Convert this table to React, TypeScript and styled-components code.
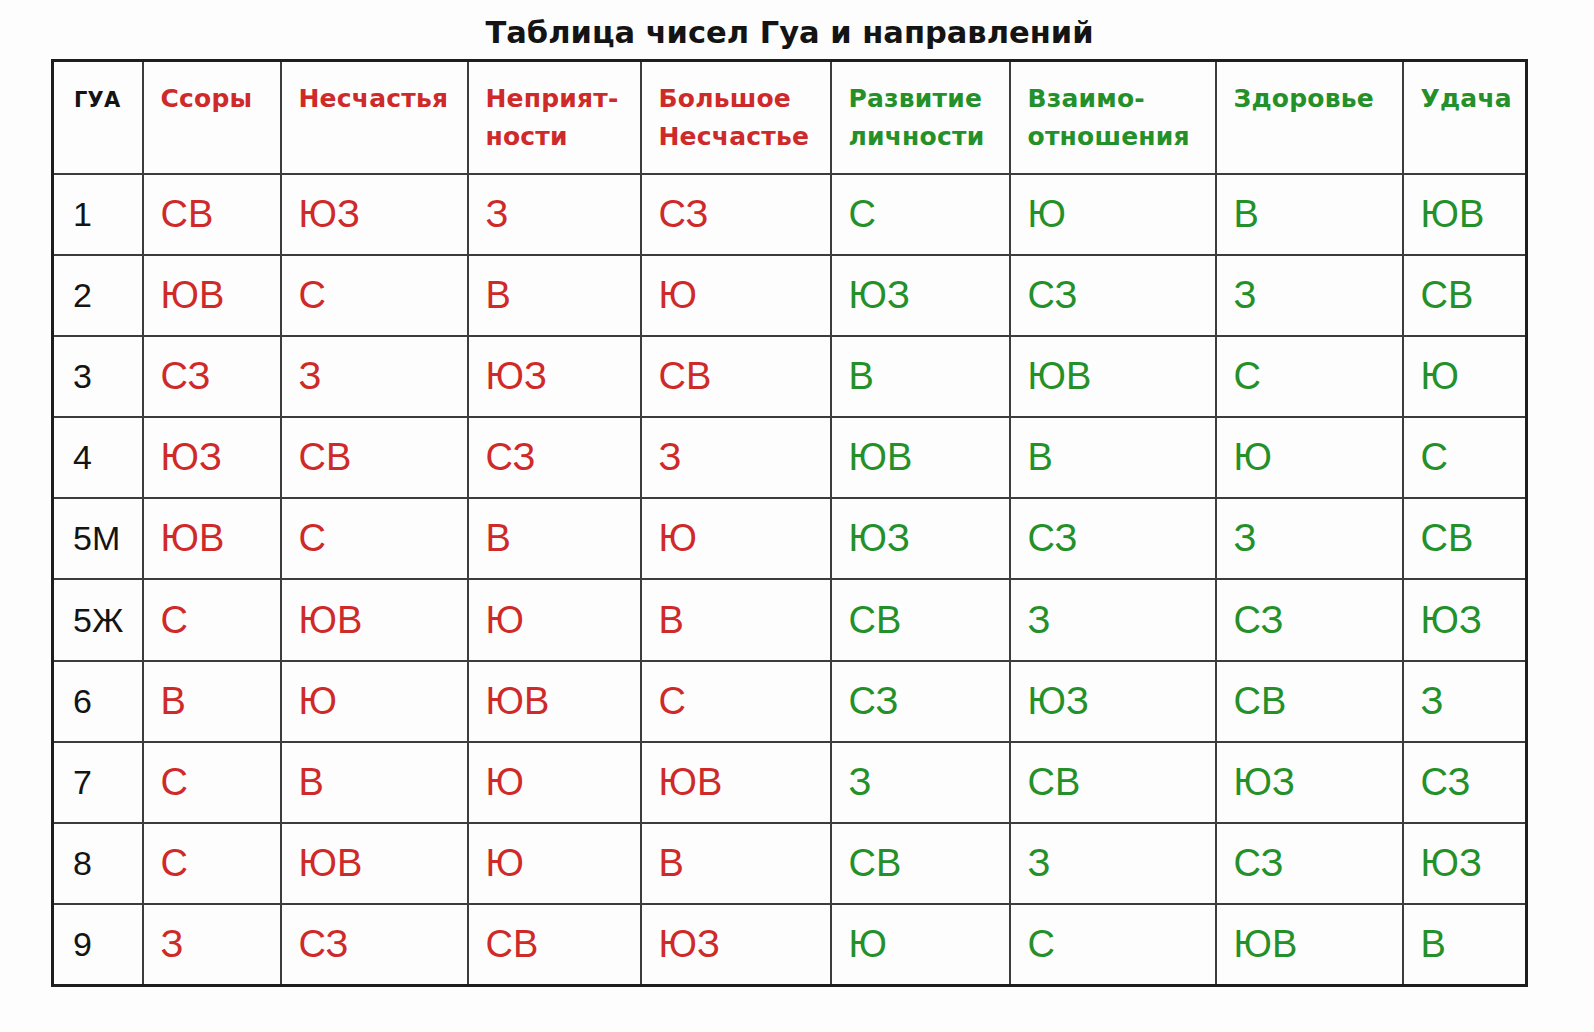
import React from "react";
import styled, { createGlobalStyle } from "styled-components";

const Global = createGlobalStyle`
  html, body { margin: 0; padding: 0; background: #ffffff; }
  body { font-family: "Liberation Sans", Arial, sans-serif; }
`;

const Page = styled.div`
  width: 1594px;
  height: 1032px;
  padding: 16px 0 0 51px;
  box-sizing: border-box;
  background: #fdfdfd;
`;

const Title = styled.h1`
  width: 1477px;
  margin: 0 0 9px 0;
  text-align: center;
  font-family: "DejaVu Sans", Verdana, sans-serif;
  font-weight: bold;
  font-size: 30.5px;
  line-height: 34px;
  color: #141414;
`;

const Table = styled.table`
  width: 1477px;
  table-layout: fixed;
  border-collapse: collapse;
  border: 3px solid #1e1e1e;
`;

const HeadRow = styled.tr`
  height: 113px;
`;

const Row = styled.tr`
  height: 81.2px;
`;

type Tone = "red" | "green" | "black";
const colorOf = (t: Tone) => (t === "red" ? "#cf2a2a" : t === "green" ? "#24902a" : "#141414");

const Th = styled.th<{ $tone: Tone; $small?: boolean }>`
  border: 2px solid #3c3c3c;
  vertical-align: top;
  text-align: left;
  padding: ${(p) => (p.$small ? "19px 0 0 20px" : "18px 0 0 17px")};
  font-family: "DejaVu Sans", Verdana, sans-serif;
  font-weight: bold;
  font-size: ${(p) => (p.$small ? "21px" : "25px")};
  line-height: 38px;
  color: ${(p) => colorOf(p.$tone)};
  white-space: nowrap;
  letter-spacing: 0.2px;
`;

const Td = styled.td<{ $tone: Tone; $lead?: boolean }>`
  border: 2px solid #3c3c3c;
  vertical-align: middle;
  text-align: left;
  padding: ${(p) => (p.$lead ? "0 0 0 19px" : "0 0 0 17px")};
  font-family: "Liberation Sans", Arial, sans-serif;
  font-size: ${(p) => (p.$lead ? "34px" : "38px")};
  color: ${(p) => colorOf(p.$tone)};
  white-space: nowrap;
`;

const widths = [90, 138, 187, 173, 190, 179, 206, 187, 124];

const headers: { lines: string[]; tone: Tone }[] = [
  { lines: ["ГУА"], tone: "black" },
  { lines: ["Ссоры"], tone: "red" },
  { lines: ["Несчастья"], tone: "red" },
  { lines: ["Неприят-", "ности"], tone: "red" },
  { lines: ["Большое", "Несчастье"], tone: "red" },
  { lines: ["Развитие", "личности"], tone: "green" },
  { lines: ["Взаимо-", "отношения"], tone: "green" },
  { lines: ["Здоровье"], tone: "green" },
  { lines: ["Удача"], tone: "green" },
];

const rows: string[][] = [
  ["1", "СВ", "ЮЗ", "З", "СЗ", "С", "Ю", "В", "ЮВ"],
  ["2", "ЮВ", "С", "В", "Ю", "ЮЗ", "СЗ", "З", "СВ"],
  ["3", "СЗ", "З", "ЮЗ", "СВ", "В", "ЮВ", "С", "Ю"],
  ["4", "ЮЗ", "СВ", "СЗ", "З", "ЮВ", "В", "Ю", "С"],
  ["5М", "ЮВ", "С", "В", "Ю", "ЮЗ", "СЗ", "З", "СВ"],
  ["5Ж", "С", "ЮВ", "Ю", "В", "СВ", "З", "СЗ", "ЮЗ"],
  ["6", "В", "Ю", "ЮВ", "С", "СЗ", "ЮЗ", "СВ", "З"],
  ["7", "С", "В", "Ю", "ЮВ", "З", "СВ", "ЮЗ", "СЗ"],
  ["8", "С", "ЮВ", "Ю", "В", "СВ", "З", "СЗ", "ЮЗ"],
  ["9", "З", "СЗ", "СВ", "ЮЗ", "Ю", "С", "ЮВ", "В"],
];

const toneFor = (i: number): Tone => (i === 0 ? "black" : i <= 4 ? "red" : "green");

export default function App() {
  return (
    <>
      <Global />
      <Page>
        <Title>Таблица чисел Гуа и направлений</Title>
        <Table>
          <colgroup>
            {widths.map((w, i) => (
              <col key={i} style={{ width: w }} />
            ))}
          </colgroup>
          <thead>
            <HeadRow>
              {headers.map((h, i) => (
                <Th key={i} $tone={h.tone} $small={i === 0}>
                  {h.lines.map((l, j) => (
                    <React.Fragment key={j}>
                      {j > 0 && <br />}
                      {l}
                    </React.Fragment>
                  ))}
                </Th>
              ))}
            </HeadRow>
          </thead>
          <tbody>
            {rows.map((r, ri) => (
              <Row key={ri}>
                {r.map((c, ci) => (
                  <Td key={ci} $tone={toneFor(ci)} $lead={ci === 0}>
                    {c}
                  </Td>
                ))}
              </Row>
            ))}
          </tbody>
        </Table>
      </Page>
    </>
  );
}
